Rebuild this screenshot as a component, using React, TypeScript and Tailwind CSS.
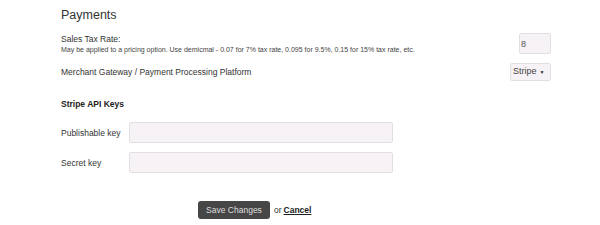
import React from "react";

export default function App() {
  return (
    <div className="w-[600px] h-[225px] bg-white text-[#333] font-['Liberation_Sans',Arial,sans-serif] pl-[61px] pr-[49px] pt-[8px] overflow-hidden">
      <h2 className="text-[12.5px] leading-[14px] font-normal">Payments</h2>

      <div className="mt-[11px] flex items-center justify-between h-[21px]">
        <div className="flex flex-col">
          <div className="text-[8.5px] leading-[10px]">Sales Tax Rate:</div>
          <div className="text-[7px] leading-[8px] mt-[2px] text-[#444]">
            May be applied to a pricing option. Use demicmal - 0.07 for 7% tax rate, 0.095 for 9.5%, 0.15 for 15% tax rate, etc.
          </div>
        </div>
        <input
          readOnly
          value="8"
          className="w-[32px] h-[21px] bg-[#f6f2f5] border border-[#e2dfe1] rounded-[2px] text-[9px] text-[#555] pl-[1px] outline-none font-['Liberation_Sans',Arial,sans-serif]"
        />
      </div>

      <div className="mt-[9px] flex items-center justify-between h-[18px]">
        <div className="text-[8.5px] leading-[10px]">Merchant Gateway / Payment Processing Platform</div>
        <div className="w-[41px] h-[18px] bg-[#f6f2f5] border border-[#e2dfe1] rounded-[2px] flex items-center pl-[2px] text-[9px] text-[#444]">
          <span>Stripe</span>
          <span className="ml-[3px] text-[5px] leading-none text-[#222]">▼</span>
        </div>
      </div>

      <div className="mt-[17.5px] text-[8.5px] leading-[10px] font-bold text-[#222]">Stripe API Keys</div>

      <div className="mt-[13.5px] flex items-center h-[21px]">
        <div className="w-[68px] text-[8.5px] leading-[10px]">Publishable key</div>
        <div className="w-[264px] h-[21px] bg-[#f6f2f5] border border-[#e2dfe1] rounded-[2px]" />
      </div>

      <div className="mt-[9px] flex items-center h-[21px]">
        <div className="w-[68px] text-[8.5px] leading-[10px]">Secret key</div>
        <div className="w-[264px] h-[21px] bg-[#f6f2f5] border border-[#e2dfe1] rounded-[2px]" />
      </div>

      <div className="mt-[28px] ml-[137px] flex items-center h-[18px]">
        <button className="h-[18px] w-[72px] bg-[#464646] rounded-[3px] text-[8.5px] text-[#ddd] flex items-center justify-center">
          Save Changes
        </button>
        <span className="ml-[4px] text-[8.5px]">or</span>
        <a className="ml-[2px] text-[8.5px] font-bold underline text-[#222]">Cancel</a>
      </div>
    </div>
  );
}
